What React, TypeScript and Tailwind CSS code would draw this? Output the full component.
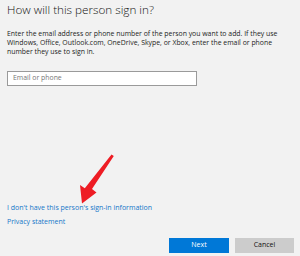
export default function App() {
  return (
    <div
      className="relative w-[300px] h-[256px] bg-[#f2f2f2] flex flex-col px-[7px] text-[#1a1a1a] overflow-hidden"
      style={{ fontFamily: "'Open Sans', 'Noto Sans', sans-serif" }}
    >
      {/* Title */}
      <h1 className="text-[11.7px] leading-[18px] font-light text-[#111]">
        How will this person sign in?
      </h1>

      {/* Description */}
      <p className="mt-[11px] text-[6.9px] leading-[9.2px] text-[#222]">
        Enter the email address or phone number of the person you want to add. If they use
        <br />
        Windows, Office, Outlook.com, OneDrive, Skype, or Xbox, enter the email or phone
        <br />
        number they use to sign in.
      </p>

      {/* Input */}
      <div className="mt-[14px] w-[190px] h-[15px] bg-white border-[1.5px] border-[#9a9a9a] flex items-center px-[5px]">
        <span className="text-[6.9px] text-[#777]">Email or phone</span>
      </div>

      <div className="flex-1" />

      {/* Links */}
      <div className="flex flex-col gap-[4px] text-[7px] leading-[10px] text-[#1577c9]">
        <span>I don't have this person's sign-in information</span>
        <span>Privacy statement</span>
      </div>

      {/* Buttons */}
      <div className="mt-[11px] mb-[3px] flex justify-end gap-[6px]">
        <button className="w-[60px] h-[15px] bg-[#0078d7] text-white text-[7px]">Next</button>
        <button className="w-[59px] h-[15px] bg-[#cccccc] text-[#111] text-[7px] mr-[-1px]">Cancel</button>
      </div>

      {/* Annotation arrow */}
      <svg className="absolute left-0 top-0" width="300" height="256" viewBox="0 0 300 256">
        <path
          d="M111.5 154.5 L113.8 156 L92 189 L96.5 192.5 L82 203.5 L80 185 L84.8 188.2 Z"
          fill="#ee1c24"
        />
      </svg>
    </div>
  );
}
